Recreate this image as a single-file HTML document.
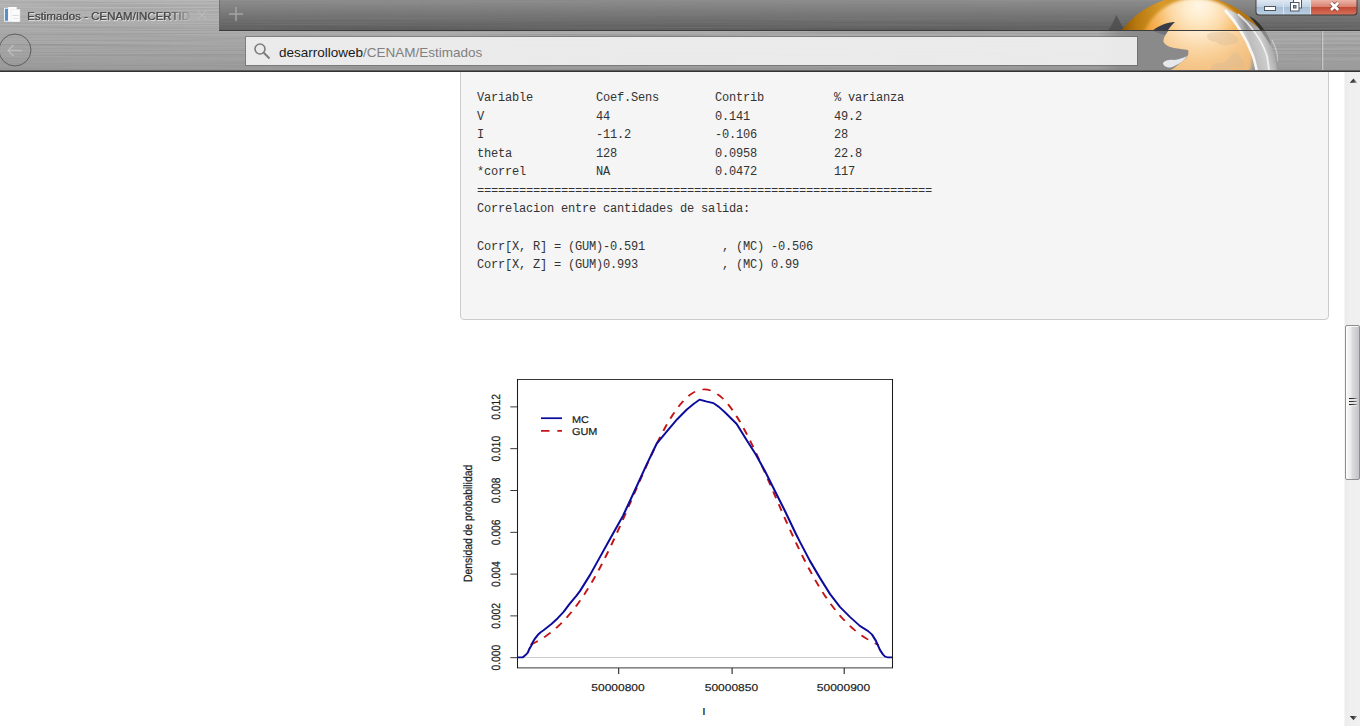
<!DOCTYPE html>
<html>
<head>
<meta charset="utf-8">
<title>Estimados - CENAM/INCERTIDUMBRE</title>
<style>
html,body{margin:0;padding:0;}
body{width:1360px;height:726px;overflow:hidden;background:#fff;position:relative;font-family:"Liberation Sans",sans-serif;}
#chrome{position:absolute;left:0;top:0;width:1360px;height:72px;overflow:hidden;}
#content{position:absolute;left:0;top:72px;width:1344px;height:654px;background:#fff;overflow:hidden;}
#pre{position:absolute;left:460px;top:-40px;width:867px;height:286px;background:#f5f5f5;border:1px solid #ccc;border-radius:4px;}
.ln{position:absolute;left:16px;height:19px;white-space:pre;font-family:"Liberation Mono",monospace;font-size:12px;letter-spacing:-0.2px;color:#333;line-height:19px;}
.ln span{position:absolute;top:0;}
#sb{position:absolute;left:1344px;top:72px;width:16px;height:654px;background:linear-gradient(90deg,#f9f9f9 0,#ececec 1.5px,#efefef 6px,#f0f0f0 100%);}
#thumb{position:absolute;left:1px;top:253px;width:15px;height:155px;border:1px solid #8e8e8e;box-sizing:border-box;border-radius:2px;background:linear-gradient(90deg,#fbfbfb 0%,#ececec 35%,#dadada 50%,#cdcdd0 80%,#c3c3c8 100%);box-shadow:inset 1px 1px 0 rgba(255,255,255,.8);}
#chart{position:absolute;left:0;top:0;}
</style>
</head>
<body>
<div id="content">
  <div id="pre">
    <div class="ln" style="top:56px"><span style="left:0">Variable</span><span style="left:119px">Coef.Sens</span><span style="left:238px">Contrib</span><span style="left:357px">% varianza</span></div>
    <div class="ln" style="top:74.5px"><span style="left:0">V</span><span style="left:119px">44</span><span style="left:238px">0.141</span><span style="left:357px">49.2</span></div>
    <div class="ln" style="top:93px"><span style="left:0">I</span><span style="left:119px">-11.2</span><span style="left:238px">-0.106</span><span style="left:357px">28</span></div>
    <div class="ln" style="top:111.5px"><span style="left:0">theta</span><span style="left:119px">128</span><span style="left:238px">0.0958</span><span style="left:357px">22.8</span></div>
    <div class="ln" style="top:130px"><span style="left:0">*correl</span><span style="left:119px">NA</span><span style="left:238px">0.0472</span><span style="left:357px">117</span></div>
    <div class="ln" style="top:148.5px">=================================================================</div>
    <div class="ln" style="top:167px">Correlacion entre cantidades de salida:</div>
    <div class="ln" style="top:204.5px"><span style="left:0">Corr[X, R] = (GUM)-0.591</span><span style="left:245px">, (MC) -0.506</span></div>
    <div class="ln" style="top:223px"><span style="left:0">Corr[X, Z] = (GUM)0.993</span><span style="left:245px">, (MC) 0.99</span></div>
  </div>
</div>

<svg id="chart" width="1360" height="726" viewBox="0 0 1360 726" style="pointer-events:none">
<g transform="translate(0,330.0) scale(1,0.83333)" fill="none">
<line x1="517.5" y1="393.12" x2="892.5" y2="393.12" stroke="#bdbdbd" stroke-width="1.1"/>
<path d="M530.5,377.7 L533.5,376.0 L536.5,374.1 L539.5,372.1 L542.5,369.9 L545.5,367.6 L548.5,365.0 L551.5,362.3 L554.5,359.3 L557.5,356.2 L560.5,352.8 L563.5,349.2 L566.5,345.3 L569.5,341.2 L572.5,336.9 L575.5,332.3 L578.5,327.5 L581.5,322.3 L584.5,317.0 L587.5,311.3 L590.5,305.5 L593.5,299.3 L596.5,292.9 L599.5,286.3 L602.5,279.4 L605.5,272.3 L608.5,265.0 L611.5,257.5 L614.5,249.9 L617.5,242.0 L620.5,234.1 L623.5,226.0 L626.5,217.8 L629.5,209.5 L632.5,201.2 L635.5,192.9 L638.5,184.6 L641.5,176.4 L644.5,168.3 L647.5,160.2 L650.5,152.3 L653.5,144.6 L656.5,137.1 L659.5,129.9 L662.5,122.9 L665.5,116.3 L668.5,110.0 L671.5,104.1 L674.5,98.6 L677.5,93.6 L680.5,89.0 L683.5,84.9 L686.5,81.3 L689.5,78.2 L692.5,75.7 L695.5,73.7 L698.5,72.3 L701.5,71.5 L704.5,71.3 L707.5,71.6 L710.5,72.6 L713.5,74.1 L716.5,76.1 L719.5,78.8 L722.5,81.9 L725.5,85.6 L728.5,89.8 L731.5,94.5 L734.5,99.7 L737.5,105.3 L740.5,111.2 L743.5,117.6 L746.5,124.3 L749.5,131.3 L752.5,138.6 L755.5,146.1 L758.5,153.9 L761.5,161.8 L764.5,169.9 L767.5,178.0 L770.5,186.3 L773.5,194.6 L776.5,202.9 L779.5,211.2 L782.5,219.4 L785.5,227.6 L788.5,235.7 L791.5,243.6 L794.5,251.4 L797.5,259.1 L800.5,266.5 L803.5,273.8 L806.5,280.8 L809.5,287.6 L812.5,294.2 L815.5,300.6 L818.5,306.7 L821.5,312.5 L824.5,318.1 L827.5,323.4 L830.5,328.4 L833.5,333.2 L836.5,337.8 L839.5,342.1 L842.5,346.1 L845.5,349.9 L848.5,353.5 L851.5,356.8 L854.5,360.0 L857.5,362.9 L860.5,365.6 L863.5,368.1 L866.5,370.4 L869.5,372.5 L872.5,374.5 L875.5,376.3 L878.5,378.0" stroke="#c41616" stroke-width="2" stroke-dasharray="8.5,7.82"/>
<path d="M517.5,393.0 L522.5,393.0 L525.4,390.2 L527.9,387.0 L529.3,382.8 L531.3,378.7 L532.8,374.5 L534.3,371.5 L537.8,365.9 L540.5,362.9 L543.7,360.2 L551.6,352.6 L557.6,346.0 L563.5,338.3 L569.5,328.7 L576.4,319.0 L580.0,313.2 L590.0,294.0 L600.0,272.4 L610.6,249.4 L623.1,222.7 L634.7,192.7 L646.2,162.6 L656.8,136.1 L667.4,121.0 L677.1,107.2 L686.7,95.5 L694.0,88.3 L699.6,83.5 L706.0,85.7 L713.5,87.7 L719.0,92.4 L725.0,98.8 L736.6,112.7 L746.2,131.2 L755.9,149.6 L765.5,170.5 L775.1,193.6 L784.8,216.7 L795.4,243.4 L800.0,254.4 L810.0,277.2 L820.0,297.6 L830.0,316.8 L840.0,332.4 L850.0,344.4 L860.0,355.2 L868.0,361.2 L872.0,365.4 L876.0,373.2 L880.0,384.0 L883.0,389.4 L885.0,391.8 L888.0,393.0 L892.5,393.0" stroke="#0c0c9c" stroke-width="2.1" stroke-linejoin="round"/>
<rect x="517.5" y="59.40" width="375" height="346.08" stroke="#1c1c1c" stroke-width="1.05"/>
<g stroke="#1c1c1c" stroke-width="1.05">
<line x1="510.3" y1="393.24" x2="517.5" y2="393.24"/>
<line x1="510.3" y1="343.08" x2="517.5" y2="343.08"/>
<line x1="510.3" y1="292.92" x2="517.5" y2="292.92"/>
<line x1="510.3" y1="242.76" x2="517.5" y2="242.76"/>
<line x1="510.3" y1="192.60" x2="517.5" y2="192.60"/>
<line x1="510.3" y1="142.44" x2="517.5" y2="142.44"/>
<line x1="510.3" y1="92.28" x2="517.5" y2="92.28"/>
<line x1="618.7" y1="405.48" x2="618.7" y2="412.68"/>
<line x1="732.1" y1="405.48" x2="732.1" y2="412.68"/>
<line x1="844.2" y1="405.48" x2="844.2" y2="412.68"/>
</g>
<line x1="541" y1="105.84" x2="562" y2="105.84" stroke="#0c0c9c" stroke-width="2.1"/>
<line x1="541" y1="121.08" x2="562" y2="121.08" stroke="#c41616" stroke-width="2" stroke-dasharray="8.5,7.82"/>
</g>
<g font-family="Liberation Sans, sans-serif" font-size="12" fill="#1c1c1c" text-anchor="middle" style="text-rendering:geometricPrecision" stroke="#1c1c1c" stroke-width="0.22">
<text transform="translate(500.2,657.70) scale(1,0.855) rotate(-90)">0.000</text>
<text transform="translate(500.2,615.90) scale(1,0.855) rotate(-90)">0.002</text>
<text transform="translate(500.2,574.10) scale(1,0.855) rotate(-90)">0.004</text>
<text transform="translate(500.2,532.30) scale(1,0.855) rotate(-90)">0.006</text>
<text transform="translate(500.2,490.50) scale(1,0.855) rotate(-90)">0.008</text>
<text transform="translate(500.2,448.70) scale(1,0.855) rotate(-90)">0.010</text>
<text transform="translate(500.2,406.90) scale(1,0.855) rotate(-90)">0.012</text>
<text transform="translate(471.5,523.4) scale(1,0.86) rotate(-90)">Densidad de probabilidad</text>
<text transform="translate(618.0,690.6) scale(1,0.83)">50000800</text>
<text transform="translate(731.4,690.6) scale(1,0.83)">50000850</text>
<text transform="translate(843.5,690.6) scale(1,0.83)">50000900</text>
<text transform="translate(704,714.7) scale(1,0.85)">I</text>
<text transform="translate(572,423) scale(1,0.9)" font-size="10.9" text-anchor="start">MC</text>
<text transform="translate(572,435.3) scale(1,0.92)" font-size="10.9" text-anchor="start">GUM</text>
</g>
</svg>

<div id="sb">
  <div id="thumb"></div>
  <svg width="16" height="654" viewBox="0 0 16 654" style="position:absolute;left:0;top:0">
    <defs><linearGradient id="gArr" x1="6" y1="0" x2="13" y2="0" gradientUnits="userSpaceOnUse"><stop offset="0" stop-color="#1e1e1e"/><stop offset="0.5" stop-color="#444"/><stop offset="1" stop-color="#9a9a9a"/></linearGradient></defs>
    <path d="M9.500,6.600 L13.200,10.700 L5.800,10.700 Z" fill="url(#gArr)"/>
    <path d="M5.800,644 L13.200,644 L9.500,648.200 Z" fill="url(#gArr)"/>
    <g>
      <rect x="5" y="326" width="8" height="1.200" fill="url(#gArr)"/><rect x="5" y="327.200" width="8" height="1" fill="#fff" opacity=".8"/>
      <rect x="5" y="329" width="8" height="1.200" fill="url(#gArr)"/><rect x="5" y="330.200" width="8" height="1" fill="#fff" opacity=".8"/>
      <rect x="5" y="332" width="8" height="1.200" fill="url(#gArr)"/><rect x="5" y="333.200" width="8" height="1" fill="#fff" opacity=".8"/>
    </g>
  </svg>
</div>

<div id="chrome">
<svg width="1360" height="72" viewBox="0 0 1360 72" style="position:absolute;left:0;top:0">
  <defs>
    <linearGradient id="gNav" x1="0" y1="0" x2="0" y2="72" gradientUnits="userSpaceOnUse">
      <stop offset="0" stop-color="#bababa"/>
      <stop offset="0.42" stop-color="#aeaeae"/>
      <stop offset="0.75" stop-color="#a5a5a5"/>
      <stop offset="1" stop-color="#9a9a9a"/>
    </linearGradient>
    <linearGradient id="gStrip" x1="0" y1="0" x2="0" y2="30" gradientUnits="userSpaceOnUse">
      <stop offset="0" stop-color="#8f8f8f"/>
      <stop offset="0.4" stop-color="#7a7a7a"/>
      <stop offset="1" stop-color="#5c5c5c"/>
    </linearGradient>
    <radialGradient id="gGlobe" cx="1199" cy="6" r="74" gradientUnits="userSpaceOnUse">
      <stop offset="0" stop-color="#fff6e6"/>
      <stop offset="0.18" stop-color="#feeccc"/>
      <stop offset="0.38" stop-color="#fcd9a6"/>
      <stop offset="0.58" stop-color="#f7b963"/>
      <stop offset="0.75" stop-color="#f2a23c"/>
      <stop offset="1" stop-color="#e48e20"/>
    </radialGradient>
    <linearGradient id="gRim" x1="1120" y1="30" x2="1260" y2="30" gradientUnits="userSpaceOnUse">
      <stop offset="0" stop-color="#8c5404"/>
      <stop offset="0.12" stop-color="#b87a10"/>
      <stop offset="0.3" stop-color="#d89a2a"/>
      <stop offset="0.7" stop-color="#c98414"/>
      <stop offset="1" stop-color="#a86a08"/>
    </linearGradient>
    <linearGradient id="gTail" x1="1236" y1="30" x2="1266" y2="22" gradientUnits="userSpaceOnUse">
      <stop offset="0" stop-color="#d8d8d8"/>
      <stop offset="0.35" stop-color="#8e8e8e"/>
      <stop offset="0.7" stop-color="#a8a8a8"/>
      <stop offset="1" stop-color="#6a6a6a"/>
    </linearGradient>
    <linearGradient id="gFoxL" x1="1098" y1="0" x2="1140" y2="0" gradientUnits="userSpaceOnUse">
      <stop offset="0" stop-color="#868686" stop-opacity="0"/>
      <stop offset="0.5" stop-color="#868686" stop-opacity="0.7"/>
      <stop offset="1" stop-color="#8a8a8a" stop-opacity="1"/>
    </linearGradient>
    <linearGradient id="gMin" x1="0" y1="0" x2="0" y2="15" gradientUnits="userSpaceOnUse">
      <stop offset="0" stop-color="#dfe9f3"/>
      <stop offset="0.45" stop-color="#c3d3e4"/>
      <stop offset="0.5" stop-color="#a9bfd6"/>
      <stop offset="1" stop-color="#bcd0e3"/>
    </linearGradient>
    <linearGradient id="gClose" x1="0" y1="0" x2="0" y2="15" gradientUnits="userSpaceOnUse">
      <stop offset="0" stop-color="#ecb4a8"/>
      <stop offset="0.45" stop-color="#d98270"/>
      <stop offset="0.5" stop-color="#c44a36"/>
      <stop offset="1" stop-color="#d6735c"/>
    </linearGradient>
    <linearGradient id="gFade" x1="168" y1="0" x2="193" y2="0" gradientUnits="userSpaceOnUse">
      <stop offset="0" stop-color="#fff"/>
      <stop offset="1" stop-color="#000"/>
    </linearGradient>
    <mask id="mFade" maskUnits="userSpaceOnUse" x="0" y="0" width="220" height="30">
      <rect x="0" y="0" width="220" height="30" fill="url(#gFade)"/>
    </mask>
    <filter id="fWash" x="0" y="0" width="100%" height="100%" color-interpolation-filters="sRGB">
      <feColorMatrix type="matrix" values="0.58 0 0 0 0.42  0 0.58 0 0 0.42  0 0 0.58 0 0.42  0 0 0 1 0"/>
    </filter>
    <filter id="fSoft" x="-5%" y="-5%" width="110%" height="110%"><feGaussianBlur stdDeviation="0.55"/></filter>
    <filter id="fSoft2" x="-10%" y="-10%" width="120%" height="120%"><feGaussianBlur stdDeviation="1.6"/></filter>
    <filter id="fBrush" x="0" y="0" width="100%" height="100%" color-interpolation-filters="sRGB">
      <feTurbulence type="fractalNoise" baseFrequency="0.004 0.7" numOctaves="2" seed="7" result="n"/>
      <feColorMatrix type="matrix" values="0 0 0 0 0.5  0 0 0 0 0.5  0 0 0 0 0.5  1.6 0 0 0 -0.62"/>
    </filter>
    <clipPath id="cTop"><rect x="0" y="0" width="1360" height="30"/></clipPath>
    <clipPath id="cBot"><rect x="0" y="31" width="1360" height="39"/></clipPath>
    <clipPath id="cAll"><rect x="0" y="0" width="1360" height="72"/></clipPath>
    <g id="art" filter="url(#fSoft)">
      <!-- inner light disc -->
      <circle cx="1196" cy="54.500" r="56.500" fill="url(#gGlobe)" filter="url(#fSoft2)"/>
      <!-- continents -->
      <path d="M1207,35 C1211,31 1218,33 1222,32 C1228,31 1234,34 1238,38 C1240,42 1236,44 1230,44 C1226,47 1220,45 1216,42 C1211,42 1206,39 1207,35 Z" fill="#b98a4e" opacity="0.38"/>
      <path d="M1232,54 C1236,51 1240,53 1241,57 C1244,60 1245,64 1243,68 C1240,70 1238,66 1234,67 C1230,70 1224,72 1212,72 C1208,66 1214,62 1222,63 C1228,62 1229,57 1232,54 Z" fill="#b98a4e" opacity="0.38"/>
      <!-- tail -->
      <path d="M1223,8 C1236,12 1250,20 1262,31 C1270,40 1276,54 1277,72 L1256,72 C1254,56 1246,38 1236,26 C1232,20 1228,14 1223,8 Z" fill="url(#gTail)"/>
      <path d="M1225,10 C1236,22 1247,40 1253,56 C1255,62 1256,68 1257,72" fill="none" stroke="#ffffff" stroke-width="2.600" opacity="0.85"/>
      <path d="M1238,14 C1250,24 1262,40 1267,56 C1268,62 1269,68 1269,72" fill="none" stroke="#ffffff" stroke-width="1.800" opacity="0.7"/>
      <path d="M1272,40 C1276,48 1278,54 1278,62" fill="none" stroke="#ffffff" stroke-width="1.300" opacity="0.4"/>
      <path d="M1249,16 C1256,19 1264,28 1268,36 C1270,40 1271,43 1271,46 C1266,38 1258,26 1249,16 Z" fill="#262626" opacity="0.85"/>
    </g>
  </defs>
  <g clip-path="url(#cAll)">
    <!-- nav + active tab base -->
    <rect x="0" y="0" width="1360" height="72" fill="url(#gNav)"/>
    <!-- inactive tab strip -->
    <rect x="219.500" y="0" width="1141" height="30" fill="url(#gStrip)"/>
    <!-- brushed metal texture -->
    <rect x="0" y="0" width="1360" height="70" filter="url(#fBrush)" opacity="0.6"/>
    <!-- art top: full colour -->
    <g clip-path="url(#cTop)">
      <path d="M1107.500,31 C1111,27 1114,20 1116.500,15 C1119,20 1122,27 1125.500,31 Z" fill="#484848" opacity="0.7" filter="url(#fSoft)"/>
      <circle cx="1191.400" cy="83.600" r="87.800" fill="url(#gRim)"/>
      <use href="#art"/>
      <path d="M1152,31 C1158,26 1166,22.500 1175,22 C1172,25 1169,28 1167,32 Z" fill="#363b47"/>
    </g>
    <!-- art bottom: washed -->
    <g clip-path="url(#cBot)">
      <g filter="url(#fWash)"><use href="#art"/></g>
      <!-- fox body / head -->
      <path d="M1098,31 L1168,31 C1165,35 1163,39 1163.500,42 C1165,45 1169,47 1174,48 L1188,50 C1189,53 1188,56 1186,58 C1180,64 1174,68 1168,72 L1098,72 Z" fill="url(#gFoxL)"/>
      <path d="M1153,31 L1168,31 C1167,32.500 1166,34 1165,35 C1161,34 1157,32.500 1153,31 Z" fill="#6c6f78" opacity="0.8"/>
      <path d="M1163,63 C1165,60 1170,59.500 1174,60 C1179,59.500 1183,58 1187,56 C1184,61 1178,65 1171,67.500 C1167,68 1163,66 1163,63 Z" fill="#f0f2f5" opacity="0.9"/>
    </g>
    <!-- tab strip separator -->
    <rect x="219" y="30" width="1141" height="1" fill="#3c3c3c"/>
    <rect x="219" y="0" width="1" height="30" fill="#555" opacity="0.6"/>
    <!-- bottom border -->
    <rect x="0" y="70" width="1360" height="2" fill="#8a8a8a"/><rect x="0" y="70.500" width="1360" height="1.500" fill="#333"/>
    <!-- URL bar -->
    <rect x="245.500" y="36.500" width="892" height="29" fill="none" stroke="#5a5a5a" stroke-opacity="0.5"/>
    <rect x="246" y="37" width="891" height="28" fill="#f0f0f0" fill-opacity="0.93"/>
    <!-- search icon -->
    <circle cx="260" cy="49" r="5" fill="none" stroke="#7d7d7d" stroke-width="1.6"/>
    <line x1="263.800" y1="52.800" x2="269.500" y2="58.500" stroke="#7d7d7d" stroke-width="2"/>
    <text x="279" y="56.500" font-family="Liberation Sans, sans-serif" font-size="13.500" fill="#1a1a1a">desarrolloweb<tspan fill="#808080">/CENAM/Estimados</tspan></text>
    <!-- back button -->
    <circle cx="15" cy="50" r="16" fill="none" stroke="#5e5e5e" stroke-width="1"/>
    <path d="M22,50.500 L8,50.500 M13.500,45 L8,50.500 L13.500,56" fill="none" stroke="#bcbcbc" stroke-width="1.300"/>
    <!-- vertical sep on right -->
    <rect x="1321" y="31" width="1" height="39" fill="#8c8c8c" opacity="0.5"/><rect x="1322" y="31" width="1.300" height="39" fill="#d0d0d0" opacity="0.8"/>
    <!-- tab: favicon -->
    <rect x="4" y="7.800" width="4.500" height="13.900" fill="#e6f0fa"/>
    <rect x="5" y="8.800" width="3" height="11.900" fill="#5b8cc4"/>
    <rect x="8.200" y="7" width="8.500" height="14.700" fill="#fdfdfd"/>
    <rect x="11" y="9.400" width="8.900" height="12.300" fill="#fbfbfb" stroke="#e9e9e9" stroke-width="0.600"/>
    <rect x="12.500" y="15" width="6" height="0.900" fill="#cfd9e6"/>
    <rect x="13.500" y="18" width="5" height="0.900" fill="#dde4ee"/>
    <!-- tab title -->
    <g mask="url(#mFade)" font-family="Liberation Sans, sans-serif" font-size="11.500">
      <text x="28" y="21.300" fill="#ffffff" opacity="0.7">Estimados - CENAM/INCERTID</text>
      <text x="27.600" y="20.400" fill="#5a5a5a" opacity="0.8">Estimados - CENAM/INCERTID</text>
      <text x="27" y="20.300" fill="#484848">Estimados - CENAM/INCERTID</text>
    </g>
    <path d="M197.500,10.500 L206.500,19.500 M206.500,10.500 L197.500,19.500" stroke="#bdbdbd" stroke-width="1" fill="none" opacity="0.85"/>
    <!-- new tab plus -->
    <path d="M229,14 L243,14 M236,7 L236,21" stroke="#a4a4a4" stroke-width="1.500" fill="none"/>
    <!-- window controls -->
    <path d="M1255.500,0 L1255.500,12 Q1255.500,15.500 1259,15.500 L1354,15.500 Q1357.500,15.500 1357.500,12 L1357.500,0 Z" fill="#2c2c2c" opacity="0.75"/>
    <path d="M1256.500,0 L1256.500,11.500 Q1256.500,14.500 1259.500,14.500 L1283,14.500 L1283,0 Z" fill="url(#gMin)"/>
    <rect x="1284" y="0" width="26" height="14.500" fill="url(#gMin)"/>
    <path d="M1311,0 L1311,14.500 L1353.500,14.500 Q1356.500,14.500 1356.500,11.500 L1356.500,0 Z" fill="url(#gClose)"/>
    <rect x="1283" y="0" width="1" height="14.500" fill="#f3f7fb" opacity="0.9"/>
    <rect x="1310" y="0" width="1" height="14.500" fill="#f3f7fb" opacity="0.9"/>
    <!-- minimize glyph -->
    <rect x="1264.500" y="6.500" width="11" height="4" fill="#fff" stroke="#4d5865" stroke-width="1"/>
    <!-- restore glyph -->
    <rect x="1293.500" y="-0.500" width="8" height="8.500" fill="#fff" stroke="#4d5865" stroke-width="1"/>
    <rect x="1290.500" y="2.500" width="8.500" height="8.500" fill="#fff" stroke="#4d5865" stroke-width="1"/>
    <rect x="1293.500" y="5.500" width="2.500" height="2.500" fill="#9aa7b6" stroke="#4d5865" stroke-width="1"/>
    <!-- close glyph -->
    <path d="M1331,2.800 L1338.200,10 M1338.200,2.800 L1331,10" stroke="#5a2a22" stroke-width="4.400" fill="none" opacity="0.65"/>
    <path d="M1331,2.800 L1338.200,10 M1338.200,2.800 L1331,10" stroke="#ffffff" stroke-width="2.800" fill="none"/>
  </g>
</svg>
</div>
</body>
</html>
